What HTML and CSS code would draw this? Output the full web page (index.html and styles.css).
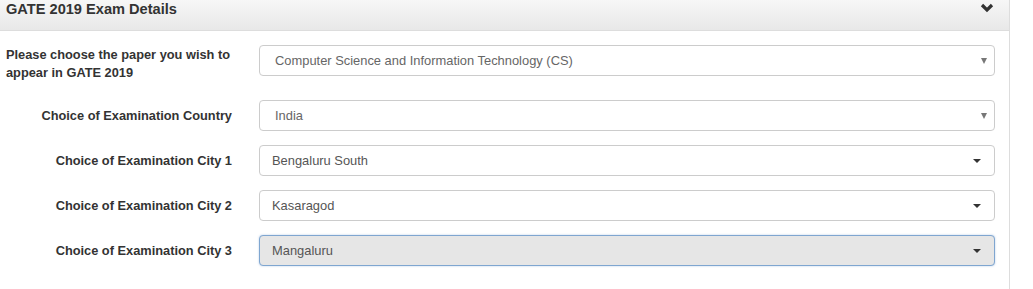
FILE: index.html
```html
<!DOCTYPE html>
<html>
<head>
<title>GATE 2019 Exam Details</title>
<link rel="stylesheet" href="styles.css">
</head>
<body>
<div class="panel">
  <div class="panel-heading">
    <span class="panel-title">GATE 2019 Exam Details</span>
    <svg class="chevron" width="14" height="10" viewBox="0 0 14 10"><polyline points="2,2 7,7 12,2" fill="none" stroke="#333" stroke-width="3.2"/></svg>
  </div>
  <div class="panel-body">
    <div class="form-group first">
      <label class="control-label left">Please choose the paper you wish to appear in GATE 2019</label>
      <div class="select s2"><span>Computer Science and Information Technology (CS)</span><b class="arrow"></b></div>
    </div>
    <div class="form-group">
      <label class="control-label">Choice of Examination Country</label>
      <div class="select s2"><span>India</span><b class="arrow"></b></div>
    </div>
    <div class="form-group">
      <label class="control-label">Choice of Examination City 1</label>
      <div class="select"><span>Bengaluru South</span><b class="caret"></b></div>
    </div>
    <div class="form-group">
      <label class="control-label">Choice of Examination City 2</label>
      <div class="select"><span>Kasaragod</span><b class="caret"></b></div>
    </div>
    <div class="form-group">
      <label class="control-label">Choice of Examination City 3</label>
      <div class="select active"><span>Mangaluru</span><b class="caret"></b></div>
    </div>
  </div>
</div>
</body>
</html>
```

FILE: styles.css
```css
body {
 margin: 0;
 background: #fff;
 font-family: "Liberation Sans", Arial, sans-serif;
 color: #333;
}

.panel {
 width: 1009px;
 border-right: 1px solid #ddd;
 height: 289px;
}

.panel-heading {
 height: 31px;
 box-sizing: border-box;
 border-bottom: 1px solid #ddd;
 background: linear-gradient(#f7f7f7, #e8e8e8);
 display: flex;
 align-items: flex-start;
 justify-content: space-between;
 padding: 0 15px 0 6px;
}

.panel-title {
 font-size: 14.6px;
 font-weight: bold;
 line-height: 18px;
}

.chevron { margin-top: 3px; }

.panel-body {
 padding: 14px 14px 0 6px;
}

.form-group {
 display: flex;
 align-items: center;
 margin-bottom: 14px;
}

.form-group.first {
 align-items: flex-start;
 margin-bottom: 18px;
}

.control-label {
 width: 226px;
 text-align: right;
 font-size: 12.8px;
 font-weight: bold;
 line-height: 18px;
 margin-right: 27px;
}

.control-label.left {
 text-align: left;
 padding-top: 1px;
}

.select {
 flex: 1;
 height: 31px;
 box-sizing: border-box;
 border: 1px solid #ccc;
 border-radius: 4px;
 display: flex;
 align-items: center;
 justify-content: space-between;
 padding: 0 13px 0 12px;
 font-size: 12.9px;
 color: #555;
 background: #fff;
}

.select.s2 {
 padding: 0 7px 0 15px;
 color: #666;
}

.select.active {
 background: #e6e6e6;
 border-color: #7fa6d0;
 box-shadow: 0 0 2px rgba(102, 150, 210, .5);
}

.arrow {
 width: 0;
 height: 0;
 border-left: 3px solid transparent;
 border-right: 3px solid transparent;
 border-top: 6px solid #777;
}

.caret {
 width: 0;
 height: 0;
 border-left: 4px solid transparent;
 border-right: 4px solid transparent;
 border-top: 4px solid #333;
}
```
